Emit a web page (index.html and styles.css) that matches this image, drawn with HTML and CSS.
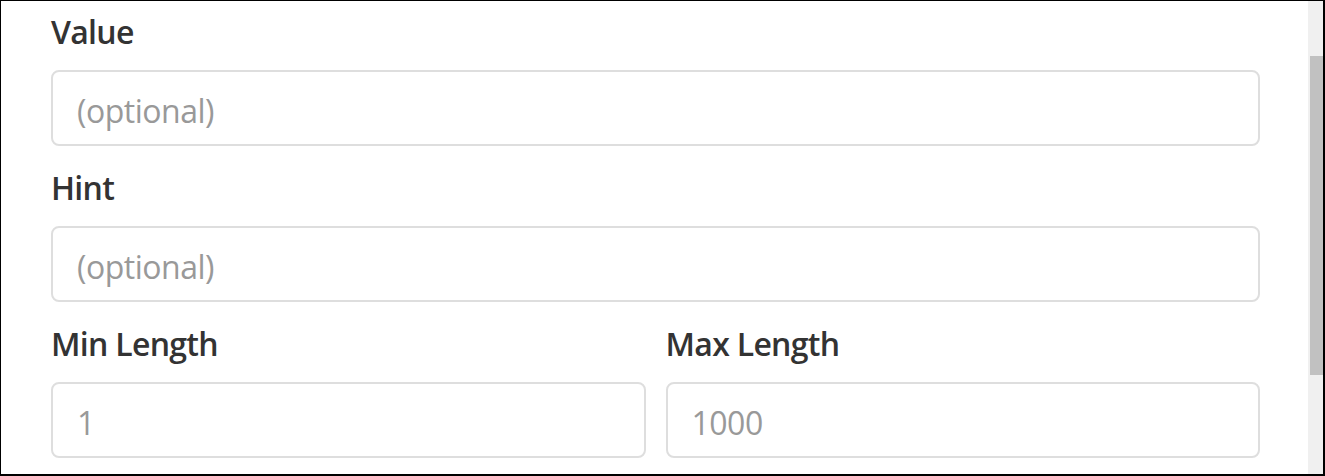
FILE: index.html
```html
<!DOCTYPE html>
<html lang="en">
<head>
<meta charset="utf-8">
<title>Field settings</title>
<link rel="stylesheet" href="styles.css">
</head>
<body>
<div class="frame">
  <div class="content">
    <div class="form-group">
      <label class="label" for="value">Value</label>
      <input class="input" id="value" type="text" placeholder="(optional)">
    </div>
    <div class="form-group">
      <label class="label" for="hint">Hint</label>
      <input class="input" id="hint" type="text" placeholder="(optional)">
    </div>
    <div class="form-row">
      <div class="form-group">
        <label class="label" for="min">Min Length</label>
        <input class="input" id="min" type="text" placeholder="1">
      </div>
      <div class="form-group">
        <label class="label" for="max">Max Length</label>
        <input class="input" id="max" type="text" placeholder="1000">
      </div>
    </div>
  </div>
  <div class="scrollbar"><div class="thumb"></div></div>
</div>
</body>
</html>
```
FILE: styles.css
```css
html, body {
  margin: 0;
  padding: 0;
  background: #fff;
}
.frame {
  box-sizing: border-box;
  width: 1325px;
  height: 476px;
  border-style: solid;
  border-color: #000;
  border-width: 1px 2px 2px 1px;
  display: flex;
  overflow: hidden;
  font-family: "Open Sans", "Noto Sans", sans-serif;
}
.content {
  flex: 1;
  min-width: 0;
  padding: 5px 48px 0 50px;
  overflow: hidden;
}
.form-group {
  display: flex;
  flex-direction: column;
  margin-bottom: 16px;
}
.form-row {
  display: flex;
  gap: 20px;
}
.form-row .form-group {
  flex: 1;
  min-width: 0;
}
.label {
  font-size: 32px;
  line-height: 48px;
  font-weight: 600;
  letter-spacing: -0.7px;
  color: #333;
  padding-top: 2px;
  margin-bottom: 14px;
}
.input {
  box-sizing: border-box;
  width: 100%;
  height: 76px;
  border: 2px solid #dedede;
  border-radius: 8px;
  padding: 4px 24px 0;
  font-family: inherit;
  font-size: 32px;
  letter-spacing: -0.5px;
  color: #495057;
  background: #fff;
  outline: none;
}
.input::placeholder {
  color: #999;
  opacity: 1;
}
.scrollbar {
  width: 15px;
  flex: none;
  background: #f0f0f0;
  display: flex;
  flex-direction: column;
}
.thumb {
  margin: 55px 0 0 2px;
  width: 13px;
  height: 319px;
  background: #c1c1c1;
}
```
